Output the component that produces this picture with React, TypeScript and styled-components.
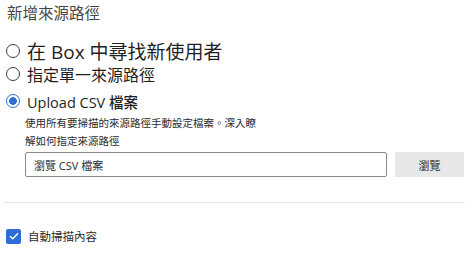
import * as React from "react";
import styled, { createGlobalStyle } from "styled-components";

const GlobalStyle = createGlobalStyle`
  html, body {
    margin: 0;
    padding: 0;
    background: #fff;
  }
  body {
    font-family: "Open Sans", "Noto Sans CJK TC", sans-serif;
    color: #222;
  }
`;

const Page = styled.div`
  width: 474px;
  height: 255px;
  box-sizing: border-box;
  padding: 0 9px 0 4px;
  display: flex;
  flex-direction: column;
`;

const Title = styled.div`
  padding-left: 3px;
  font-family: "Noto Sans CJK TC", sans-serif;
  font-size: 15.5px;
  line-height: 24px;
  color: #474747;
`;

const Options = styled.div`
  margin-top: 15px;
  padding-left: 2px;
  display: flex;
  flex-direction: column;
`;

const RadioRow = styled.label<{ $size: number; $height: number; $top?: number; $bold?: boolean }>`
  display: flex;
  align-items: center;
  gap: 7px;
  height: ${(p) => p.$height}px;
  margin-top: ${(p) => p.$top ?? 0}px;
  font-size: ${(p) => p.$size}px;
  font-weight: ${(p) => (p.$bold ? 500 : 400)};
  color: #1f1f1f;
  white-space: nowrap;
`;

const RadioDot = styled.span<{ $checked?: boolean }>`
  flex: 0 0 auto;
  width: 14px;
  height: 14px;
  box-sizing: border-box;
  border-radius: 50%;
  border: 1px solid ${(p) => (p.$checked ? "#2f6fd3" : "#3c3c3c")};
  background: ${(p) => (p.$checked ? "radial-gradient(circle, #2f6fd3 0 3.6px, #fff 4px)" : "#fff")};
`;

const Detail = styled.div`
  padding-left: 21px;
  display: flex;
  flex-direction: column;
`;

const Description = styled.p`
  margin: 2px 0 0;
  max-width: 234px;
  font-family: "Noto Sans CJK TC", sans-serif;
  font-size: 10.5px;
  line-height: 18px;
  color: #2b2b2b;
`;

const FileRow = styled.div`
  margin-top: 2px;
  display: flex;
  gap: 8px;
  height: 25px;
`;

const FileInput = styled.div`
  width: 362px;
  box-sizing: border-box;
  border: 1px solid #8a8a8a;
  border-radius: 2px;
  padding-left: 8px;
  display: flex;
  align-items: center;
  font-size: 11px;
  color: #2a2a2a;
`;

const BrowseButton = styled.button`
  width: 69px;
  border: none;
  background: #e8e8e8;
  font-family: "Noto Sans CJK TC", sans-serif;
  font-size: 11px;
  color: #2a2a2a;
  padding: 0;
`;

const Divider = styled.hr`
  margin: 25px 0 0;
  border: none;
  height: 1px;
  background: #e6e6e6;
`;

const CheckRow = styled.label`
  margin-top: 23px;
  padding-left: 2px;
  height: 20px;
  display: flex;
  align-items: center;
  gap: 7px;
  font-family: "Noto Sans CJK TC", sans-serif;
  font-size: 11.5px;
  color: #2a2a2a;
`;

const CheckBox = styled.span`
  width: 15px;
  height: 15px;
  border-radius: 2px;
  background: #2f6fd3;
  display: flex;
  align-items: center;
  justify-content: center;
`;

export default function App() {
  return (
    <>
      <GlobalStyle />
      <Page>
        <Title>新增來源路徑</Title>
        <Options>
          <RadioRow $size={19} $height={24}>
            <RadioDot />
            在 Box 中尋找新使用者
          </RadioRow>
          <RadioRow $size={16} $height={22}>
            <RadioDot />
            指定單一來源路徑
          </RadioRow>
          <RadioRow $size={14.5} $height={22} $top={5} $bold>
            <RadioDot $checked />
            Upload CSV 檔案
          </RadioRow>
        </Options>
        <Detail>
          <Description>使用所有要掃描的來源路徑手動設定檔案。深入瞭解如何指定來源路徑</Description>
          <FileRow>
            <FileInput>瀏覽 CSV 檔案</FileInput>
            <BrowseButton>瀏覽</BrowseButton>
          </FileRow>
        </Detail>
        <Divider />
        <CheckRow>
          <CheckBox>
            <svg width="10" height="8" viewBox="0 0 10 8">
              <path d="M1 4.2 L3.8 6.8 L9 1.2" fill="none" stroke="#fff" strokeWidth="1.4" />
            </svg>
          </CheckBox>
          自動掃描內容
        </CheckRow>
      </Page>
    </>
  );
}
